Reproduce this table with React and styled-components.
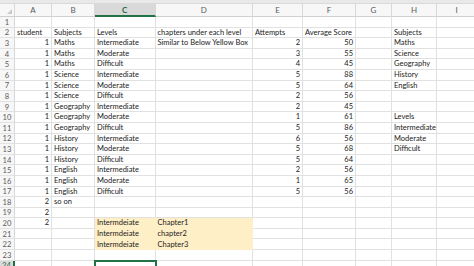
import React from "react";
import styled, { createGlobalStyle, css } from "styled-components";

const Global = createGlobalStyle`
  html, body { margin: 0; padding: 0; background: #ffffff; overflow: hidden; }
  #root { width: 474px; height: 266px; overflow: hidden; }
`;

const COLS = ["A", "B", "C", "D", "E", "F", "G", "H", "I"];
const WIDTHS = "15px 37px 43px 60.5px 97.5px 50px 53px 36px 45px 40px";

const Window = styled.div`
  width: 474px;
  height: 266px;
  overflow: hidden;
  display: flex;
  flex-direction: column;
  font-family: Lato, "Open Sans", sans-serif;
`;

const TopStrip = styled.div`
  height: 4px;
  flex: none;
  background: #e9e9e9;
  border-bottom: 1px solid #d9d9d9;
  box-sizing: border-box;
`;

const Sheet = styled.div`
  display: grid;
  grid-template-columns: ${WIDTHS};
  grid-template-rows: 13px repeat(24, 10.6px);
  width: max-content;
`;

const HeaderBase = css`
  box-sizing: border-box;
  background: #f7f7f7;
  color: #5b5b5b;
  font-size: 8px;
  display: flex;
  align-items: center;
  justify-content: center;
  border-right: 1px solid #d8d8d8;
  border-bottom: 1px solid #d0d0d0;
  white-space: nowrap;
`;

const Corner = styled.div`
  ${HeaderBase};
  position: relative;
  &::after {
    content: "";
    position: absolute;
    right: 2px;
    bottom: 2px;
    width: 0;
    height: 0;
    border-left: 5px solid transparent;
    border-bottom: 5px solid #c9c9c9;
  }
`;

const ColHeader = styled.div`
  ${HeaderBase};
  ${(p) =>
    p.$selected &&
    css`
      background: #d9d9d9;
      color: #1e6b41;
      font-weight: 700;
      border-bottom: 2px solid #217346;
    `}
`;

const RowHeader = styled.div`
  ${HeaderBase};
  font-size: 7.6px;
  border-bottom-color: #e2e2e2;
  ${(p) =>
    p.$selected &&
    css`
      background: #d9d9d9;
      color: #1e6b41;
      border-right: 2px solid #217346;
    `}
`;

const Cell = styled.div`
  box-sizing: border-box;
  border-right: 1px solid #e1e1e1;
  border-bottom: 1px solid #e1e1e1;
  font-size: 7.5px;
  color: #222222;
  display: flex;
  align-items: flex-end;
  justify-content: ${(p) => (p.$num ? "flex-end" : "flex-start")};
  padding: 0 2px 0.5px 2px;
  white-space: nowrap;
  overflow: visible;
  line-height: 9px;
  ${(p) =>
    p.$fill &&
    css`
      background: #ffefc6;
      border-right-color: #ffefc6;
      border-bottom-color: #ffefc6;
    `}
  ${(p) =>
    p.$selected &&
    css`
      outline: 2px solid #217346;
      outline-offset: -1px;
    `}
`;

const DATA = [
  [],
  ["student", "Subjects", "Levels", "chapters under each level", "Attempts", "Average Score", "", "Subjects"],
  [1, "Maths", "Intermediate", "Similar to Below Yellow Box", 2, 50, "", "Maths"],
  [1, "Maths", "Moderate", "", 3, 55, "", "Science"],
  [1, "Maths", "Difficult", "", 4, 45, "", "Geography"],
  [1, "Science", "Intermediate", "", 5, 88, "", "History"],
  [1, "Science", "Moderate", "", 5, 64, "", "English"],
  [1, "Science", "Difficult", "", 2, 56],
  [1, "Geography", "Intermediate", "", 2, 45],
  [1, "Geography", "Moderate", "", 1, 61, "", "Levels"],
  [1, "Geography", "Difficult", "", 5, 86, "", "Intermediate"],
  [1, "History", "Intermediate", "", 6, 56, "", "Moderate"],
  [1, "History", "Moderate", "", 5, 68, "", "Difficult"],
  [1, "History", "Difficult", "", 5, 64],
  [1, "English", "Intermediate", "", 2, 56],
  [1, "English", "Moderate", "", 1, 65],
  [1, "English", "Difficult", "", 5, 56],
  [2, "so on"],
  [2],
  [2, "", "Intermdeiate", "Chapter1"],
  ["", "", "Intermdeiate", "chapter2"],
  ["", "", "Intermdeiate", "Chapter3"],
  [],
  [],
];

const isFilled = (r, c) => r >= 20 && r <= 22 && (c === 2 || c === 3);

export default function App() {
  return (
    <>
      <Global />
      <Window>
        <TopStrip />
        <Sheet>
          <Corner />
          {COLS.map((c) => (
            <ColHeader key={c} $selected={c === "C"}>
              {c}
            </ColHeader>
          ))}
          {DATA.map((row, ri) => {
            const r = ri + 1;
            return (
              <React.Fragment key={r}>
                <RowHeader $selected={r === 24}>{r}</RowHeader>
                {COLS.map((c, ci) => {
                  const v = row[ci];
                  return (
                    <Cell
                      key={c}
                      $num={typeof v === "number"}
                      $fill={isFilled(r, ci)}
                      $selected={r === 24 && ci === 2}
                    >
                      {v === undefined ? "" : v}
                    </Cell>
                  );
                })}
              </React.Fragment>
            );
          })}
        </Sheet>
      </Window>
    </>
  );
}
